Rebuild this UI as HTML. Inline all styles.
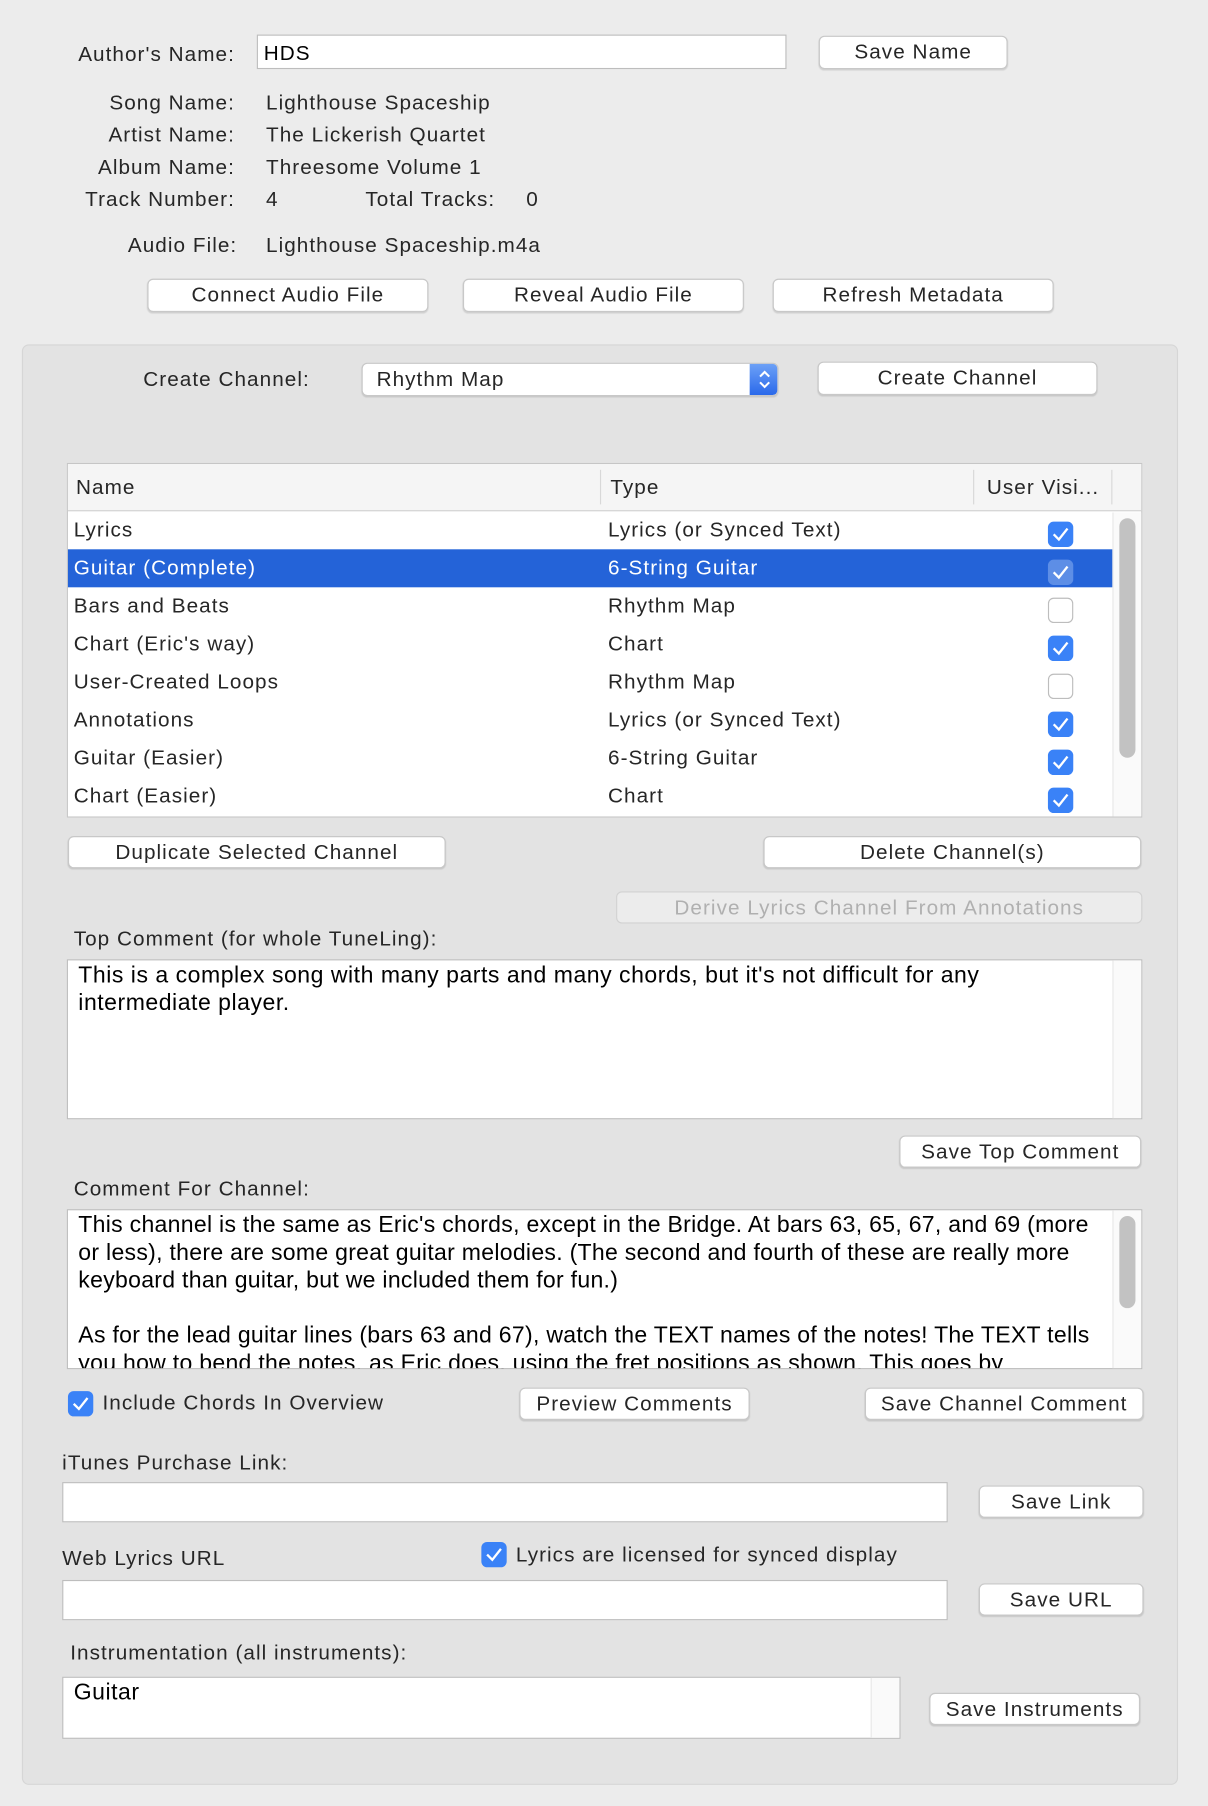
<!DOCTYPE html>
<html><head><meta charset="utf-8"><style>
html,body{margin:0;padding:0;background:#ececec;width:1208px;height:1806px;overflow:hidden}
#w{position:absolute;left:0;top:0;width:1049px;height:1568px;transform:scale(1.15157);transform-origin:0 0;font-family:"Liberation Sans",sans-serif;font-size:18px;color:#262626;letter-spacing:0.9px}
#w div{position:absolute;box-sizing:border-box}
.l{white-space:nowrap;line-height:22px}
.r{text-align:right}
.b{background:#fff;border:1px solid #c8c8c8;border-radius:5px;box-shadow:0 1px 1px rgba(0,0,0,.12);text-align:center;line-height:26px;color:#262626;white-space:nowrap}
.in{background:#fff;border:1px solid #bdbdbd}
.cb{width:22px;height:22px;border-radius:5px;background:#3a82f7;}
.cb svg{position:absolute;left:3px;top:3px}
.cu{width:22px;height:22px;border-radius:5px;background:#fff;border:1px solid #bdbdbd}
.ta{font-size:20px;color:#000;line-height:24px;letter-spacing:0.45px}
</style></head><body><div id="w">
<div class="l r" style="left:0;width:204px;top:36px">Author's Name:</div>
<div class="in" style="left:223px;top:30px;width:460px;height:30px"></div>
<div class="l" style="left:229px;top:35px;color:#000">HDS</div>
<div class="b" style="left:711px;top:31px;width:164px;height:29px">Save Name</div>

<div class="l r" style="left:0;width:204px;top:78px">Song Name:</div>
<div class="l r" style="left:0;width:204px;top:106px">Artist Name:</div>
<div class="l r" style="left:0;width:204px;top:134px">Album Name:</div>
<div class="l r" style="left:0;width:204px;top:162px">Track Number:</div>
<div class="l" style="left:231px;top:78px">Lighthouse Spaceship</div>
<div class="l" style="left:231px;top:106px">The Lickerish Quartet</div>
<div class="l" style="left:231px;top:134px">Threesome Volume 1</div>
<div class="l" style="left:231px;top:162px">4</div>
<div class="l r" style="left:250px;width:180px;top:162px">Total Tracks:</div>
<div class="l" style="left:457px;top:162px">0</div>
<div class="l r" style="left:0;width:206px;top:202px">Audio File:</div>
<div class="l" style="left:231px;top:202px">Lighthouse Spaceship.m4a</div>
<div class="b" style="left:128px;top:242px;width:244px;height:29px">Connect Audio File</div>
<div class="b" style="left:402px;top:242px;width:244px;height:29px">Reveal Audio File</div>
<div class="b" style="left:671px;top:242px;width:244px;height:29px">Refresh Metadata</div>

<div style="left:19px;top:299px;width:1004px;height:1251px;background:#e3e3e3;border:1px solid #d6d6d6;border-radius:6px"></div>
<div class="l r" style="left:0;width:269px;top:318px">Create Channel:</div>
<div class="b" style="left:314px;top:315px;width:362px;height:29px;text-align:left;padding-left:12px;overflow:hidden">Rhythm Map
<div style="left:336px;top:-1px;width:26px;height:29px;background:linear-gradient(#6fa3f7,#2867ea);border-radius:0 5px 5px 0"><svg width="26" height="29"><path d="M9 12 L13 8 L17 12 M9 17 L13 21 L17 17" stroke="#fff" stroke-width="1.8" fill="none"/></svg></div></div>
<div class="b" style="left:710px;top:314px;width:243px;height:29px">Create Channel</div>

<div style="left:58px;top:402px;width:934px;height:308px;background:#fff;border:1px solid #c6c6c6"></div>
<div style="left:59px;top:403px;width:932px;height:41px;background:#f5f5f5;border-bottom:1px solid #d2d2d2"></div>
<div style="left:521px;top:408px;width:1px;height:30px;background:#d8d8d8"></div>
<div style="left:845px;top:408px;width:1px;height:30px;background:#d8d8d8"></div>
<div style="left:965px;top:408px;width:1px;height:30px;background:#d8d8d8"></div>
<div class="l" style="left:66px;top:412px">Name</div>
<div class="l" style="left:530px;top:412px">Type</div>
<div class="l" style="left:857px;top:412px">User Visi...</div>
<div style="left:59px;top:477px;width:907px;height:33px;background:#2463d8"></div>
<div style="left:966px;top:445px;width:25px;height:264px;background:#fafafa;border-left:1px solid #e8e8e8"></div>
<div style="left:972px;top:450px;width:14px;height:208px;background:#c2c2c2;border-radius:7px"></div>

<div class="l" style="left:64px;top:449px">Lyrics</div><div class="l" style="left:528px;top:449px">Lyrics (or Synced Text)</div>
<div class="l" style="left:64px;top:482px;color:#fff">Guitar (Complete)</div><div class="l" style="left:528px;top:482px;color:#fff">6-String Guitar</div>
<div class="l" style="left:64px;top:515px">Bars and Beats</div><div class="l" style="left:528px;top:515px">Rhythm Map</div>
<div class="l" style="left:64px;top:548px">Chart (Eric's way)</div><div class="l" style="left:528px;top:548px">Chart</div>
<div class="l" style="left:64px;top:581px">User-Created Loops</div><div class="l" style="left:528px;top:581px">Rhythm Map</div>
<div class="l" style="left:64px;top:614px">Annotations</div><div class="l" style="left:528px;top:614px">Lyrics (or Synced Text)</div>
<div class="l" style="left:64px;top:647px">Guitar (Easier)</div><div class="l" style="left:528px;top:647px">6-String Guitar</div>
<div class="l" style="left:64px;top:680px">Chart (Easier)</div><div class="l" style="left:528px;top:680px">Chart</div>

<div class="cb" style="left:910px;top:453px"><svg width="16" height="16"><path d="M2 8 L6.5 12.5 L14 3" stroke="#fff" stroke-width="2" fill="none"/></svg></div>
<div class="cb" style="left:910px;top:486px;background:#5d8ee6"><svg width="16" height="16"><path d="M2 8 L6.5 12.5 L14 3" stroke="#fff" stroke-width="2" fill="none"/></svg></div>
<div class="cu" style="left:910px;top:519px"></div>
<div class="cb" style="left:910px;top:552px"><svg width="16" height="16"><path d="M2 8 L6.5 12.5 L14 3" stroke="#fff" stroke-width="2" fill="none"/></svg></div>
<div class="cu" style="left:910px;top:585px"></div>
<div class="cb" style="left:910px;top:618px"><svg width="16" height="16"><path d="M2 8 L6.5 12.5 L14 3" stroke="#fff" stroke-width="2" fill="none"/></svg></div>
<div class="cb" style="left:910px;top:651px"><svg width="16" height="16"><path d="M2 8 L6.5 12.5 L14 3" stroke="#fff" stroke-width="2" fill="none"/></svg></div>
<div class="cb" style="left:910px;top:684px"><svg width="16" height="16"><path d="M2 8 L6.5 12.5 L14 3" stroke="#fff" stroke-width="2" fill="none"/></svg></div>

<div class="b" style="left:59px;top:726px;width:328px;height:28px">Duplicate Selected Channel</div>
<div class="b" style="left:663px;top:726px;width:328px;height:28px">Delete Channel(s)</div>
<div class="b" style="left:535px;top:774px;width:457px;height:28px;background:#ececec;color:#b0b0b0;border-color:#d2d2d2;box-shadow:none">Derive Lyrics Channel From Annotations</div>

<div class="l" style="left:64px;top:804px">Top Comment (for whole TuneLing):</div>
<div class="in" style="left:58px;top:833px;width:934px;height:139px"></div>
<div style="left:966px;top:834px;width:25px;height:137px;background:#fafafa;border-left:1px solid #e8e8e8"></div>
<div class="ta" style="left:68px;top:835px;width:840px">This is a complex song with many parts and many chords, but it's not difficult for any intermediate player.</div>
<div class="b" style="left:781px;top:986px;width:210px;height:28px">Save Top Comment</div>

<div class="l" style="left:64px;top:1021px">Comment For Channel:</div>
<div class="in" style="left:58px;top:1050px;width:934px;height:139px;overflow:hidden">
<div class="ta" style="left:9px;top:1px;width:897px;letter-spacing:0.25px">This channel is the same as Eric's chords, except in the Bridge. At bars 63, 65, 67, and 69 (more or less), there are some great guitar melodies. (The second and fourth of these are really more keyboard than guitar, but we included them for fun.)<br><br>As for the lead guitar lines (bars 63 and 67), watch the TEXT names of the notes! The TEXT tells you how to bend the notes, as Eric does, using the fret positions as shown. This goes by</div>
<div style="left:907px;top:0;width:26px;height:139px;background:#fafafa;border-left:1px solid #e8e8e8"></div>
<div style="left:913px;top:5px;width:14px;height:80px;background:#c2c2c2;border-radius:7px"></div>
</div>

<div class="cb" style="left:59px;top:1208px"><svg width="16" height="16"><path d="M2 8 L6.5 12.5 L14 3" stroke="#fff" stroke-width="2" fill="none"/></svg></div>
<div class="l" style="left:89px;top:1207px">Include Chords In Overview</div>
<div class="b" style="left:451px;top:1205px;width:200px;height:28px">Preview Comments</div>
<div class="b" style="left:751px;top:1205px;width:242px;height:28px">Save Channel Comment</div>

<div class="l" style="left:54px;top:1259px">iTunes Purchase Link:</div>
<div class="in" style="left:54px;top:1287px;width:769px;height:35px"></div>
<div class="b" style="left:850px;top:1290px;width:143px;height:28px">Save Link</div>
<div class="l" style="left:54px;top:1342px">Web Lyrics URL</div>
<div class="cb" style="left:418px;top:1339px"><svg width="16" height="16"><path d="M2 8 L6.5 12.5 L14 3" stroke="#fff" stroke-width="2" fill="none"/></svg></div>
<div class="l" style="left:448px;top:1339px">Lyrics are licensed for synced display</div>
<div class="in" style="left:54px;top:1372px;width:769px;height:35px"></div>
<div class="b" style="left:850px;top:1375px;width:143px;height:28px">Save URL</div>
<div class="l" style="left:61px;top:1424px">Instrumentation (all instruments):</div>
<div class="in" style="left:54px;top:1456px;width:728px;height:54px"></div>
<div style="left:756px;top:1457px;width:25px;height:52px;background:#fafafa;border-left:1px solid #e8e8e8"></div>
<div class="ta" style="left:64px;top:1458px">Guitar</div>
<div class="b" style="left:807px;top:1470px;width:183px;height:28px">Save Instruments</div>
</div></body></html>
